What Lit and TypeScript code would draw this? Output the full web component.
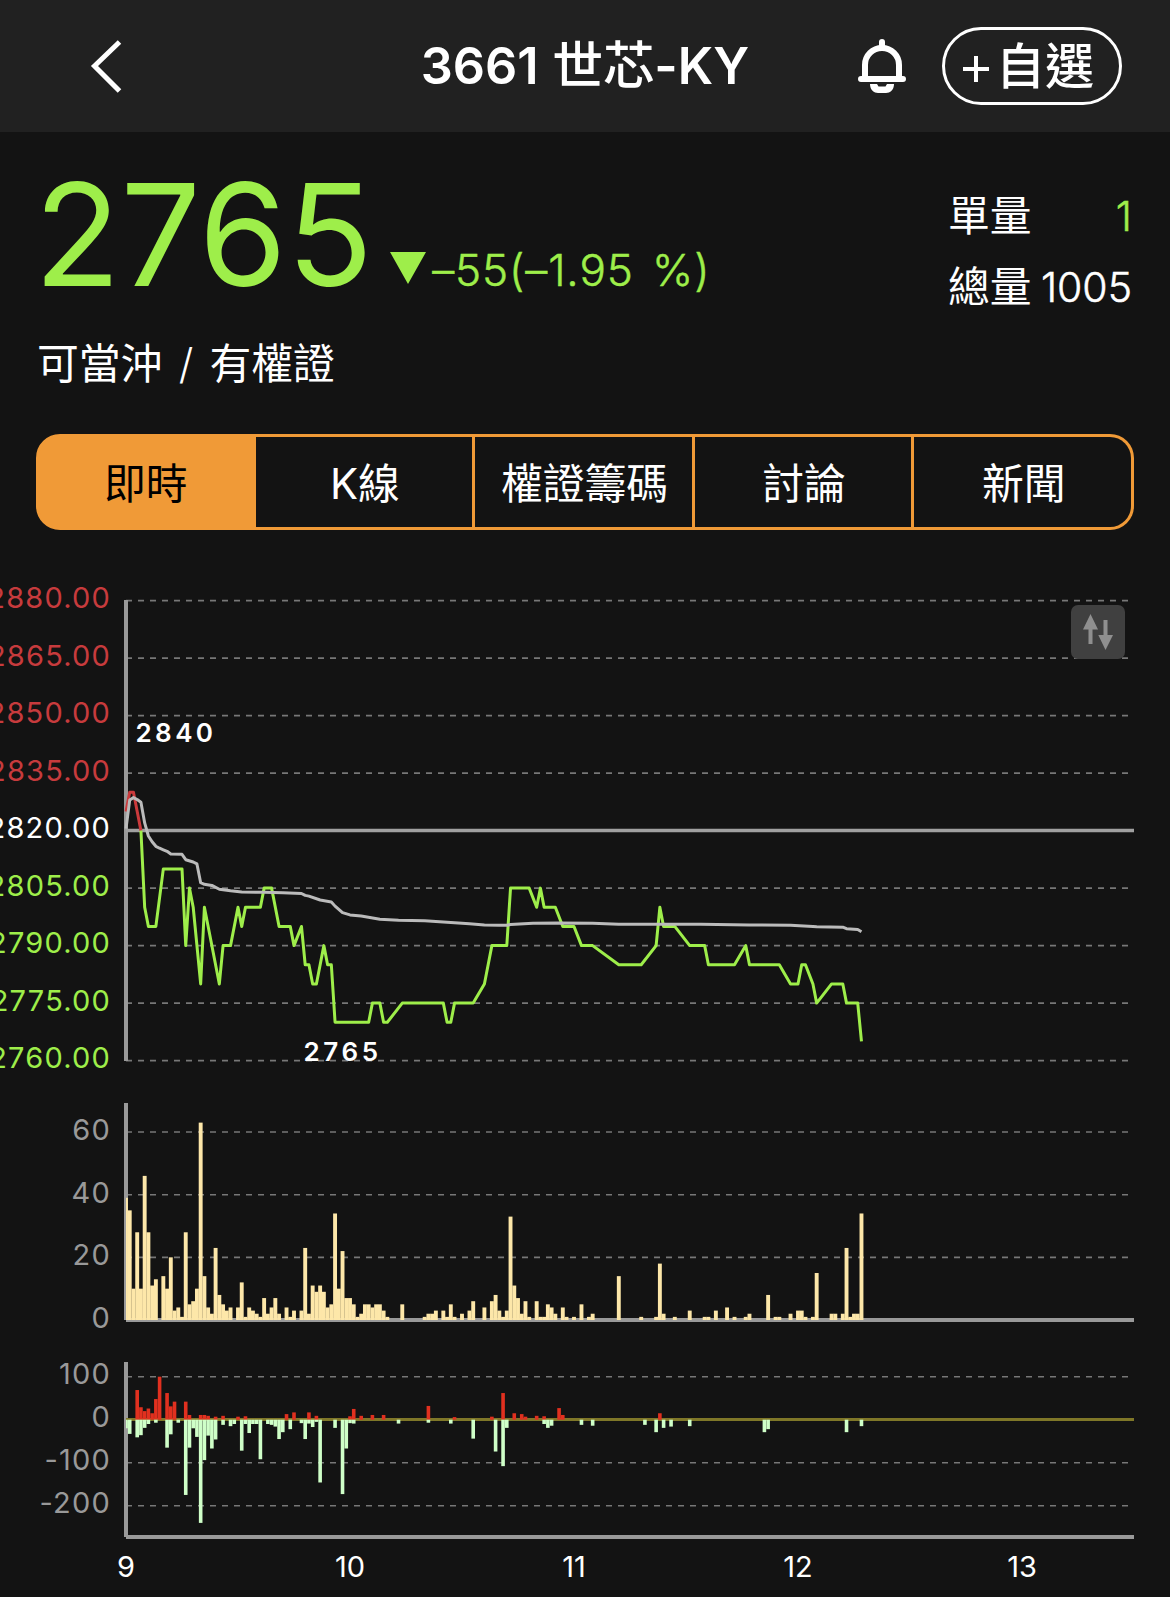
import { LitElement, html, svg, css } from "lit";
import { customElement, state } from "lit/decorators.js";
import { classMap } from "lit/directives/class-map.js";

type Pair = [number, number];

/* [minutes after 9:00, price] */
const PRICE: Pair[] = [
  [0, 2825], [1, 2830], [2, 2830], [3, 2825], [4, 2820], [5, 2800], [6, 2795], [8, 2795], [10, 2810], [15, 2810],
  [16, 2790], [17, 2805], [18, 2800], [20, 2780], [21, 2800], [25, 2780], [26, 2790], [28, 2790], [30, 2800],
  [31, 2795], [32, 2800], [36, 2800], [37, 2805], [39, 2805], [41, 2795], [44, 2795], [45, 2790], [47, 2795],
  [48, 2785], [49, 2785], [50, 2780], [51, 2780], [53, 2790], [54, 2785], [55, 2785], [56, 2770], [65, 2770],
  [66, 2775], [68, 2775], [69, 2770], [70, 2770], [74, 2775], [85, 2775], [86, 2770], [87, 2770], [88, 2775],
  [93, 2775], [96, 2780], [98, 2790], [102, 2790], [103, 2805], [108, 2805], [110, 2800], [111, 2805],
  [112, 2800], [115, 2800], [117, 2795], [120, 2795], [122, 2790], [125, 2790], [132, 2785], [138, 2785],
  [142, 2790], [143, 2800], [144, 2795], [147, 2795], [151, 2790], [155, 2790], [156, 2785], [163, 2785],
  [166, 2790], [167, 2785], [175, 2785], [178, 2780], [180, 2780], [181, 2785], [182, 2785], [184, 2780],
  [185, 2775], [189, 2780], [192, 2780], [193, 2775], [196, 2775], [197, 2765],
];

const AVERAGE: Pair[] = [
  [0, 2820.5], [1, 2828], [2, 2828.6], [3, 2828.1], [4, 2827.4], [5, 2822], [6, 2818.6], [7, 2817.1], [8, 2815.9],
  [9, 2815.4], [10, 2815], [11, 2814.6], [12, 2813.9], [15, 2813.8], [16, 2812.4], [18, 2811.8], [19, 2811.3],
  [20, 2806.4], [21, 2806], [23, 2805.7], [25, 2804.7], [28, 2804.3], [31, 2804], [37, 2803.9], [42, 2803.8],
  [47, 2803.6], [48, 2803.1], [49, 2802.9], [52, 2801.9], [55, 2801.4], [56, 2800.3], [58, 2798.6], [60, 2798],
  [63, 2797.7], [68, 2796.9], [73, 2796.6], [80, 2796.5], [87, 2796], [92, 2795.7], [96, 2795.4], [100, 2795.3],
  [102, 2795.3], [103, 2795.5], [109, 2795.8], [116, 2795.9], [125, 2795.8], [132, 2795.6], [154, 2795.6],
  [167, 2795.4], [178, 2795.3], [184, 2795], [185, 2794.9], [192, 2794.8], [193, 2794.4], [196, 2794.2], [197, 2793.6],
];

const VOLUME: Pair[] = [
  ...[
    39, 35, 10, 28, 10, 46, 28, 11, 13, 0, 14, 10, 20, 3, 4, 1, 28, 5, 6, 10, 63, 14, 4, 2, 23, 8, 5, 3, 4, 0,
    4, 12, 1, 4, 3, 2, 1, 7, 2, 4, 7, 2, 0, 4, 1, 3, 0, 3, 23, 2, 11, 9, 11, 9, 4, 5, 34, 10, 22, 7,
    7, 5, 1, 2, 5, 5, 4, 5, 5, 3, 1,
  ].map((v, i): Pair => [i, v]),
  [74, 5], [80, 1], [81, 2], [82, 2], [83, 3], [85, 3], [86, 1], [87, 5], [88, 1], [90, 2], [92, 3], [93, 6],
  [96, 4], [98, 6], [99, 8], [100, 3], [101, 1], [102, 3], [103, 33], [104, 11], [105, 7], [106, 2], [107, 6],
  [108, 1], [110, 6], [111, 1], [112, 1], [113, 5], [114, 4], [115, 2], [117, 4], [118, 1], [120, 1], [122, 5],
  [124, 1], [125, 2], [132, 14], [138, 1], [142, 1], [143, 18], [144, 2], [147, 1], [151, 3], [155, 1], [156, 1],
  [158, 3], [161, 4], [163, 1], [166, 1], [167, 2], [172, 8], [174, 1], [175, 1], [178, 2], [180, 3], [181, 3],
  [182, 1], [184, 1], [185, 15], [189, 2], [190, 2], [192, 2], [193, 23], [194, 1], [195, 2], [196, 2], [197, 34],
];

const BUY: Pair[] = [
  [3, 69], [4, 29], [5, 20], [6, 26], [7, 15], [8, 48], [9, 100], [11, 62], [12, 31], [13, 42], [16, 42], [17, 11],
  [20, 11], [21, 11], [22, 9], [24, 7], [26, 9], [30, 7], [32, 8], [43, 13], [45, 17], [49, 17], [51, 9], [60, 8],
  [61, 25], [63, 9], [66, 11], [69, 11], [81, 32], [88, 6], [98, 7], [101, 62], [104, 15], [106, 13], [107, 7],
  [110, 9], [112, 8], [116, 27], [117, 11], [143, 15],
];

const SELL: Pair[] = [
  [0, -20], [1, -33], [3, -41], [4, -36], [5, -19], [6, -10], [8, -7], [11, -65], [12, -34], [14, -7], [16, -175],
  [17, -65], [18, -20], [19, -40], [20, -240], [21, -94], [22, -37], [23, -67], [24, -46], [26, -12], [28, -15],
  [29, -10], [31, -72], [32, -10], [33, -31], [34, -10], [35, -10], [36, -92], [38, -10], [39, -12], [40, -16],
  [41, -45], [42, -29], [44, -22], [47, -8], [48, -45], [49, -9], [50, -17], [51, -5], [52, -146], [56, -19],
  [58, -173], [59, -67], [60, -8], [61, -9], [73, -9], [81, -7], [87, -9], [93, -44], [99, -74], [101, -108],
  [102, -19], [112, -10], [113, -19], [114, -14], [122, -12], [125, -14], [139, -12], [142, -29], [144, -19],
  [146, -16], [151, -15], [171, -29], [172, -22], [193, -29], [197, -15],
];

const LEFT = 126;
const RIGHT = 1134;
const MINUTE = (RIGHT - LEFT) / 270;
const xAt = (minute: number) => LEFT + minute * MINUTE;

const path = (points: Pair[], yAt: (v: number) => number) =>
  points.map(([m, v], i) => `${i ? "L" : "M"}${xAt(m).toFixed(2)} ${yAt(v).toFixed(2)}`).join("");

/* One rect per minute, between the zero level and its value. */
const bars = (points: Pair[], yAt: (v: number) => number, width: number) =>
  points
    .filter(([, v]) => v !== 0)
    .map(([m, v]) => {
      const x0 = Math.max(LEFT, xAt(m) - width / 2);
      const x1 = xAt(m) + width / 2;
      return svg`<rect x=${x0.toFixed(2)} y=${Math.min(yAt(0), yAt(v)).toFixed(2)} width=${(x1 - x0).toFixed(2)} height=${Math.abs(yAt(v) - yAt(0)).toFixed(2)}></rect>`;
    });

@customElement("intraday-charts")
class IntradayCharts extends LitElement {
  static styles = css`
    :host { display: flex; flex-direction: column; }
    svg { display: block; width: 1170px; font-family: Inter, "Liberation Sans", sans-serif; }
    .price { height: 517px; }
    .volume { height: 254px; }
    .flow { height: 252px; }
    .grid { stroke: #777; stroke-width: 1.6; stroke-dasharray: 6 6; }
    .axis { stroke: #999; stroke-width: 4; }
    .reference { stroke: #a0a0a0; stroke-width: 3.5; }
    .zero { stroke: #7f7728; stroke-width: 3; }
    .line { fill: none; stroke-width: 3; stroke-linejoin: round; }
    .up { stroke: #cb3a3c; }
    .down { stroke: #9eee4a; }
    .average { stroke: #bbb; }
    .label { font-size: 29px; fill: #999; text-anchor: end; letter-spacing: 1.2px; }
    .label-up { fill: #c73b3d; }
    .label-flat { fill: #fff; }
    .label-down { fill: #9eee4a; }
    .hour { font-size: 29px; fill: #fff; text-anchor: middle; }
    .mark { font-size: 26px; font-weight: 600; fill: #fff; }
    .volume-bars { fill: #fde7a9; }
    .buy-bars { fill: #e1301f; }
    .sell-bars { fill: #cfffc8; }
    .toggle { fill: #404040; }
    .arrow { fill: #8f8f8f; }
  `;

  private grid(values: number[], yAt: (v: number) => number) {
    return values.map((v) => svg`<line class="grid" x1=${LEFT} x2=${RIGHT} y1=${yAt(v)} y2=${yAt(v)}></line>`);
  }

  private priceChart() {
    const yAt = (v: number) => 600.6 + (2880 - v) * (460 / 120);
    const levels = [2880, 2865, 2850, 2835, 2820, 2805, 2790, 2775, 2760];
    const tone = (v: number) => (v > 2820 ? "label-up" : v < 2820 ? "label-down" : "label-flat");
    const turn = PRICE.findIndex(([, v]) => v === 2820);
    return html`<svg class="price" viewBox="0 574 1170 517">
      ${this.grid(levels.filter((v) => v !== 2820), yAt)}
      <line class="axis" x1="126" x2="126" y1="600" y2="1061"></line>
      ${levels.map((v) => svg`<text class="label ${tone(v)}" x="111" y=${yAt(v) + 7.4}>${v.toFixed(2)}</text>`)}
      <line class="reference" x1=${LEFT} x2=${RIGHT} y1=${yAt(2820)} y2=${yAt(2820)}></line>
      <path class="line up" d=${path(PRICE.slice(0, turn + 1), yAt)}></path>
      <path class="line down" d=${path(PRICE.slice(turn), yAt)}></path>
      <path class="line average" d=${path(AVERAGE, yAt)}></path>
      <text class="mark" x="135.5" y="742" textLength="77.5">2840</text>
      <text class="mark" x="303.5" y="1061" textLength="74.5">2765</text>
      <rect class="toggle" x="1071" y="605" width="54" height="54" rx="7"></rect>
      <path class="arrow" d="M1090.5 614L1098 629.5H1092.5V644H1088.5V629.5H1083Z"></path>
      <path class="arrow" d="M1105.5 650L1098.3 635H1103.5V620H1107.5V635H1113Z"></path>
    </svg>`;
  }

  private volumeChart() {
    const yAt = (v: number) => 1320 - v * 3.133;
    return html`<svg class="volume" viewBox="0 1091 1170 254">
      ${this.grid([60, 40, 20], yAt)}
      <line class="axis" x1="126" x2="126" y1="1103" y2="1320"></line>
      <line class="axis" x1="126" x2="1134" y1="1320" y2="1320"></line>
      ${[60, 40, 20, 0].map((v) => svg`<text class="label" x="111" y=${yAt(v) + 8}>${v}</text>`)}
      <g class="volume-bars">${bars(VOLUME, yAt, 3.9)}</g>
    </svg>`;
  }

  private flowChart() {
    const yAt = (v: number) => 1419.7 - v * 0.43;
    return html`<svg class="flow" viewBox="0 1345 1170 252">
      ${this.grid([100, -100, -200], yAt)}
      <line class="axis" x1="126" x2="126" y1="1362" y2="1537"></line>
      <line class="axis" x1="126" x2="1134" y1="1537" y2="1537"></line>
      <line class="zero" x1="126" x2="1134" y1="1419.5" y2="1419.5"></line>
      ${[100, 0, -100, -200].map((v) => svg`<text class="label" x="111" y=${yAt(v) + 7.3}>${v}</text>`)}
      <g class="buy-bars">${bars(BUY, yAt, 3.6)}</g>
      <g class="sell-bars">${bars(SELL, yAt, 3.6)}</g>
      ${[9, 10, 11, 12, 13].map((h) => svg`<text class="hour" x=${xAt((h - 9) * 60)} y="1576.6">${h}</text>`)}
    </svg>`;
  }

  render() {
    return [this.priceChart(), this.volumeChart(), this.flowChart()];
  }
}

@customElement("app-root")
class AppRoot extends LitElement {
  @state() private tab = 0;

  static styles = css`
    :host {
      display: block;
      width: 1170px;
      height: 1597px;
      overflow: hidden;
      background: #131313;
      color: #fff;
      font-family: Inter, "Noto Sans CJK TC", sans-serif;
    }
    * { box-sizing: border-box; }
    .header {
      display: grid;
      grid-template-columns: 1fr auto 1fr;
      align-items: center;
      height: 132px;
      padding: 0 48px;
      background: #212121;
    }
    .back { width: 34px; height: 56px; display: block; margin-left: 40px; }
    .title { margin: 0; font-size: 50.4px; line-height: 60px; font-weight: 600; white-space: nowrap; }
    .title .cjk { font-size: 51px; font-weight: 500; margin-left: 1px; }
    .actions { display: flex; align-items: center; justify-content: flex-end; gap: 36px; }
    .bell { display: block; width: 48px; height: 56px; }
    .add {
      display: flex; align-items: center; gap: 6px;
      width: 180px; height: 78px; padding: 2px 0 0 17px;
      border: 3px solid #fff; border-radius: 39px;
      font-size: 49px; line-height: 60px; font-weight: 500; white-space: nowrap;
    }
    .plus { display: block; width: 28px; height: 28px; margin-top: 3px; }
    .quote { display: flex; justify-content: space-between; height: 190px; padding: 0 38px 0 34px; }
    .last { display: flex; align-items: baseline; color: #9eee4a; white-space: nowrap; }
    .value { font-size: 142px; line-height: 204px; font-weight: 400; }
    .arrow { width: 36px; height: 34px; display: block; margin: 0 6px 0 17px; }
    .change { font-size: 44px; font-weight: 300; letter-spacing: 0.9px; word-spacing: 5px; -webkit-text-stroke: 0.5px currentColor; }
    .volumes { display: grid; grid-template-columns: auto 1fr; width: 184px; margin-top: 49px; grid-auto-rows: 71px; font-size: 41.8px; line-height: 71px; font-weight: 400; white-space: nowrap; }
    .number { font-size: 41px; font-weight: 300; text-align: right; -webkit-text-stroke: 0.5px currentColor; }
    .green { color: #9eee4a; }
    .flags { height: 84px; padding-left: 37px; font-size: 41.8px; line-height: 84px; font-weight: 400; white-space: pre; word-spacing: 4.5px; }
    .slash { font-weight: 300; }
    .tabs { display: grid; grid-template-columns: repeat(5, minmax(0, 1fr)); height: 96px; margin: 28px 36px 0; }
    .tab {
      display: flex; align-items: center; justify-content: center;
      border: 3px solid #f09a37; border-left-width: 0; padding: 3px 0 0 2px;
      font-size: 41.8px; line-height: 60px; font-weight: 400; white-space: nowrap;
    }
    .tab:first-child { border-left-width: 3px; border-radius: 24px 0 0 24px; padding-left: 0; }
    .tab:last-child { border-radius: 0 24px 24px 0; }
    .active { background: #f09a37; color: #000; }
    .charts { margin-top: 44px; }
  `;

  render() {
    return html`
      <header class="header">
        <svg class="back" viewBox="88 37 34 56" fill="none" stroke="#fff" stroke-width="5">
          <path d="M119.5 41L94.5 65L119.5 90"></path>
        </svg>
        <h1 class="title">3661 <span class="cjk">世芯</span>-KY</h1>
        <div class="actions">
          <svg class="bell" viewBox="858 38 48 56" fill="none" stroke="#fff" stroke-width="6" stroke-linecap="round">
            <path d="M882 42V47M861 79H903"></path>
            <path d="M865 78V65A17 17 0 0 1 899 65V78" stroke-linecap="butt"></path>
            <path d="M870 84H894C894 90 890 93 886 93H878C874 93 870 90 870 84Z" fill="#fff" stroke="none"></path>
            <path d="M877 84H887L885.5 86.5H878.5Z" fill="#212121" stroke="none"></path>
          </svg>
          <div class="add">
            <svg class="plus" viewBox="0 0 28 28" stroke="#fff" stroke-width="4"><path d="M14 1V27M1 14H27"></path></svg>
            <span>自選</span>
          </div>
        </div>
      </header>
      <section class="quote">
        <div class="last">
          <span class="value">2765</span>
          <svg class="arrow" viewBox="0 0 36 34"><path d="M0 0H36L18 32Z" fill="#9eee4a"></path></svg>
          <span class="change">–55(–1.95 %)</span>
        </div>
        <div class="volumes">
          <span>單量</span><span class="number green">1</span>
          <span>總量</span><span class="number">1005</span>
        </div>
      </section>
      <div class="flags">可當沖 <span class="slash">/</span> 有權證</div>
      <nav class="tabs">
        ${["即時", "K線", "權證籌碼", "討論", "新聞"].map(
          (name, i) => html`<div class=${classMap({ tab: true, active: i === this.tab })} @click=${() => (this.tab = i)}>${name}</div>`,
        )}
      </nav>
      <intraday-charts class="charts"></intraday-charts>
    `;
  }
}
